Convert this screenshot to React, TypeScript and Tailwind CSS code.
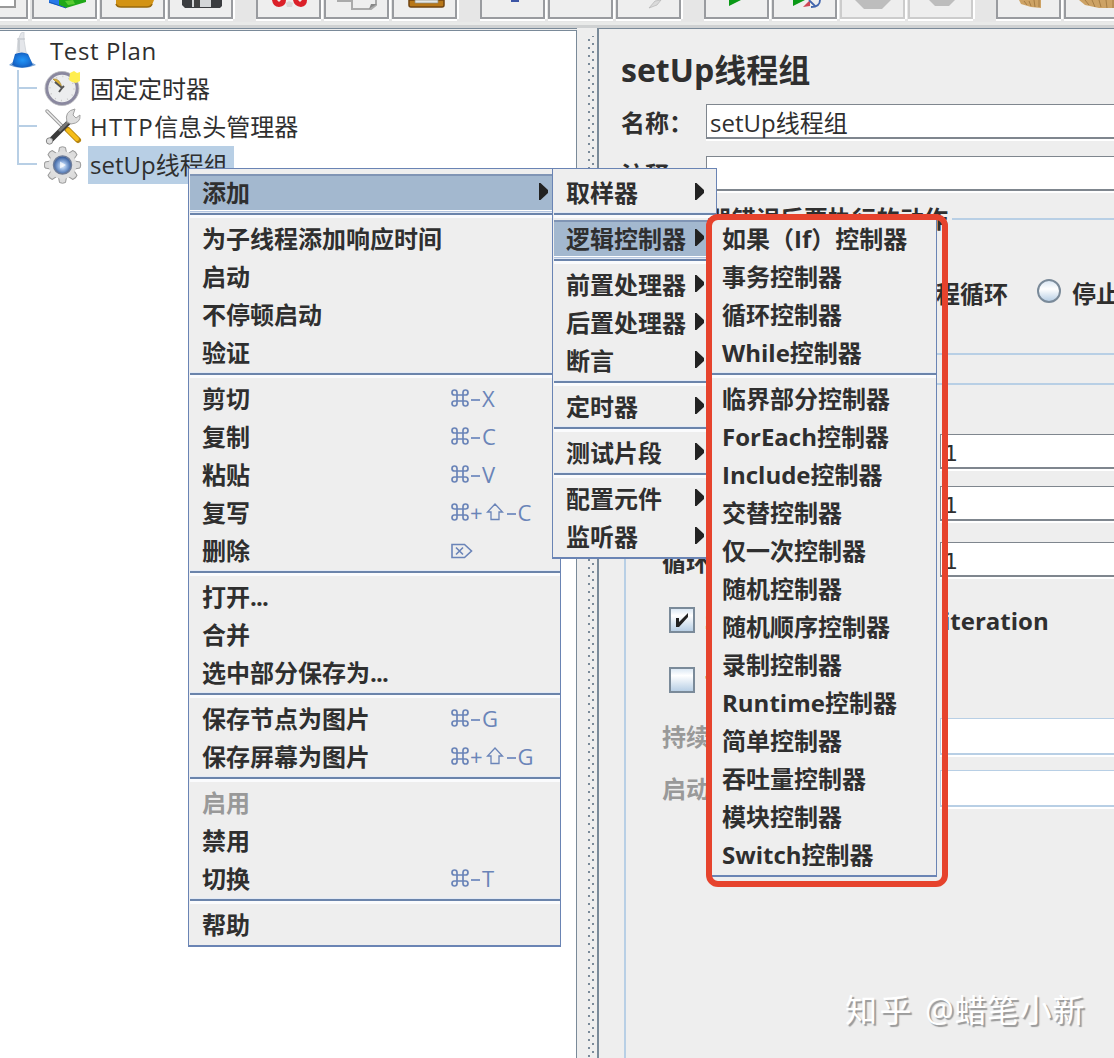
import type { ReactNode } from "react";

type Item = {
  label: string;
  keys?: string;
  arrow?: boolean;
  active?: boolean;
  disabled?: boolean;
};

const contextMenu: Item[][] = [
  [{ label: "添加", arrow: true, active: true }],
  [{ label: "为子线程添加响应时间" }, { label: "启动" }, { label: "不停顿启动" }, { label: "验证" }],
  [
    { label: "剪切", keys: "⌘–X" },
    { label: "复制", keys: "⌘–C" },
    { label: "粘贴", keys: "⌘–V" },
    { label: "复写", keys: "⌘+⇧–C" },
    { label: "删除", keys: "⌦" },
  ],
  [{ label: "打开..." }, { label: "合并" }, { label: "选中部分保存为..." }],
  [
    { label: "保存节点为图片", keys: "⌘–G" },
    { label: "保存屏幕为图片", keys: "⌘+⇧–G" },
  ],
  [{ label: "启用", disabled: true }, { label: "禁用" }, { label: "切换", keys: "⌘–T" }],
  [{ label: "帮助" }],
];

const addMenu: Item[][] = [
  [{ label: "取样器", arrow: true }],
  [{ label: "逻辑控制器", arrow: true, active: true }],
  [
    { label: "前置处理器", arrow: true },
    { label: "后置处理器", arrow: true },
    { label: "断言", arrow: true },
  ],
  [{ label: "定时器", arrow: true }],
  [{ label: "测试片段", arrow: true }],
  [
    { label: "配置元件", arrow: true },
    { label: "监听器", arrow: true },
  ],
];

const controllerMenu: Item[][] = [
  [{ label: "如果（If）控制器" }, { label: "事务控制器" }, { label: "循环控制器" }, { label: "While控制器" }],
  [
    "临界部分控制器",
    "ForEach控制器",
    "Include控制器",
    "交替控制器",
    "仅一次控制器",
    "随机控制器",
    "随机顺序控制器",
    "录制控制器",
    "Runtime控制器",
    "简单控制器",
    "吞吐量控制器",
    "模块控制器",
    "Switch控制器",
  ].map((label) => ({ label })),
];

function Shortcut({ keys }: { keys: string }) {
  return (
    <span className="-mt-0.5 flex w-[110px] items-center font-['Open_Sans'] text-[22px] font-normal text-[#6a84b8]">
      {[...keys].map((k, i) => {
        if (k === "⌘")
          return (
            <svg key={i} width="20" height="18" viewBox="0 0 20 18" fill="none" stroke="currentColor" strokeWidth="1.7">
              <path d="M7 6H13V12H7ZM7 6H4.4A2.5 2.5 0 1 1 7 3.5ZM13 6V3.5A2.5 2.5 0 1 1 15.6 6ZM13 12H15.6A2.5 2.5 0 1 1 13 14.5ZM7 12V14.5A2.5 2.5 0 1 1 4.4 12Z" />
            </svg>
          );
        if (k === "⇧")
          return (
            <svg key={i} className="mr-[2px] ml-[3px]" width="18" height="18" viewBox="0 0 18 18" fill="none" stroke="currentColor" strokeWidth="1.3">
              <path d="M9 1L16.5 9H13V16.500H5V9H1.500Z" />
            </svg>
          );
        if (k === "⌦")
          return (
            <svg key={i} className="mt-0.5" width="24" height="18" viewBox="0 0 24 18" fill="none" stroke="currentColor" strokeWidth="1.6">
              <path d="M2 2.500H14.500L21.500 9L14.500 15.500H2ZM6 5.500L13 12.500M13 5.500L6 12.500" />
            </svg>
          );
        if (k === "–") return <span key={i} className="mt-[3px] mr-0.5 ml-px h-[2px] w-[9px] bg-[#7f96c4]" />;
        return (
          <span key={i} className="leading-6">
            {k}
          </span>
        );
      })}
    </span>
  );
}

function MenuRow({ item, arrowPad }: { item: Item; arrowPad: string }) {
  const [name, dots] = item.label.endsWith("...") ? [item.label.slice(0, -3), "..."] : [item.label, ""];
  return (
    <div className="flex h-[38px] flex-col">
      <div
        className={`flex h-[36px] items-center border-t-2 pl-3 ${
          item.active ? "border-[#8095b5] bg-[#a3b8cf]" : "border-transparent"
        } ${item.disabled ? "text-[#999]" : "text-[#2f2f2f]"}`}
      >
        <span className="flex-1 whitespace-nowrap">
          {name}
          {dots && <span className="tracking-[-0.8px]">{dots}</span>}
        </span>
        {item.keys && <Shortcut keys={item.keys} />}
        {item.arrow && (
          <svg className={`-mt-1 ${arrowPad}`} width="9" height="17" viewBox="0 0 9 17" fill="#222">
            <path d="M0 0H1.500L9 7V10L1.500 17H0Z" />
          </svg>
        )}
      </div>
      {item.active && <div className="h-0.5 border-b border-[#b5c6e0] bg-white" />}
    </div>
  );
}

function Menu({ groups, place, arrowPad = "" }: { groups: Item[][]; place: string; arrowPad?: string }) {
  return (
    <div className={`absolute flex flex-col border border-b-2 border-[#6a84b4] bg-[#eee] pb-px pl-px text-2xl font-bold ${place}`}>
      {groups.map((g, i) => (
        <div key={i} className="flex flex-col">
          {i > 0 && (
            <div className="flex h-2 flex-col">
              <div className="h-px bg-[#e3eaf5]" />
              <div className="h-0.5 bg-[#6b84ab]" />
              <div className="h-[3px] bg-[#fafbfd]" />
            </div>
          )}
          {g.map((it) => (
            <MenuRow key={it.label} item={it} arrowPad={arrowPad} />
          ))}
        </div>
      ))}
    </div>
  );
}

function ToolButton({ children, disabled, className = "" }: { children?: ReactNode; disabled?: boolean; className?: string }) {
  return (
    <div
      className={`mr-[3px] flex h-[19px] w-[65px] shrink-0 justify-center border-x-2 border-b-2 bg-[#eee] shadow-[0_2px_0_#fff,2px_0_0_#fff] ${
        disabled ? "border-[#ccc]" : "border-[#999b9f]"
      } ${className}`}
    >
      <svg width="56" height="14" viewBox="0 0 56 14">
        {children}
      </svg>
    </div>
  );
}

function Toolbar() {
  return (
    <div className="flex h-7 shrink-0 flex-col bg-[#dedede]">
      <div className="flex h-[22px] overflow-hidden bg-[#e6e6e6]">
        <div className="mr-1 h-[19px] w-[28px] shrink-0 border-r-2 border-b-2 border-[#999b9f] bg-[#eee] shadow-[0_2px_0_#fff,2px_0_0_#fff]">
          <div className="h-2 w-4 border-r-2 border-b-2 border-[#999] bg-white" />
        </div>
        <ToolButton>
          <path d="M12 0H30V8L12 3Z" fill="#2878e8" />
          <path d="M22 0H49V2L29 8L22 5Z" fill="#20a818" />
          <path d="M28 1L36 0L38 4L31 5Z" fill="#58cc30" />
          <path d="M12 2L29 8" stroke="#1758b8" />
        </ToolButton>
        <ToolButton>
          <path d="M11 0H49L47 5Q46 7 42 7H16Q12 7 11 4Z" fill="#d39314" />
          <path d="M11 4Q12 7 16 7H42Q46 7 47 4" stroke="#98690d" strokeWidth="1.500" fill="none" />
        </ToolButton>
        <ToolButton>
          <path d="M9 0H49V6L47 8H12L9 5Z" fill="#3b3d40" />
          <path d="M19 0H38V7H19Z" fill="#d4d6d8" />
          <path d="M21 0H27V7H21Z" fill="#444" />
        </ToolButton>
        <ToolButton className="ml-5">
          <path d="M11 0Q12 7 18 7Q25 6 25 0ZM32 0Q33 6 40 7Q46 6 46 0Z" fill="#db2028" />
          <path d="M16 0L18 2L20 0ZM37 0L39 2L41 0Z" fill="#eee" />
          <path d="M25 3L28 1L32 3L31 7H26Z" fill="#d8d8d8" />
        </ToolButton>
        <ToolButton>
          <path d="M9 0V1H23V-2H47V5L42 9H23V0" fill="#eee" stroke="#aaa" strokeWidth="2" />
          <path d="M40 9L42 4H48Z" fill="#888" />
        </ToolButton>
        <ToolButton>
          <path d="M12 0H47V5Q47 7 45 7H14Q12 7 12 5Z" fill="#b87718" stroke="#704410" strokeWidth="1.500" />
          <path d="M18 0H41V3H18Z" fill="#e5e8e8" stroke="#8a8a80" strokeWidth=".7" />
        </ToolButton>
        <ToolButton className="ml-5">
          <rect x="26" y="0" width="8" height="2" fill="#3c55a5" />
        </ToolButton>
        <ToolButton />
        <ToolButton>
          <path d="M28 8L34 1L40 0L36 5Z" fill="#dadada" stroke="#b5b5b5" strokeWidth=".7" />
        </ToolButton>
        <ToolButton className="ml-5">
          <path d="M20 0H32L20 6Z" fill="#0a9916" />
        </ToolButton>
        <ToolButton>
          <path d="M16 0H28L16 6Z" fill="#0a9916" />
          <path d="M26 7L33 0V6Z" fill="#cf4655" />
          <path d="M34 7Q43 7 43 0M32 0L38 6" stroke="#4265ad" strokeWidth="1.800" fill="none" />
        </ToolButton>
        <ToolButton disabled>
          <path d="M10 0H46L37 9H19Z" fill="#bdbdbd" />
        </ToolButton>
        <ToolButton disabled>
          <path d="M16 0H42L36 6H22Z" fill="#bdbdbd" />
        </ToolButton>
        <ToolButton className="ml-5">
          <path d="M18 0H40V8L30 7L20 4Z" fill="#cda264" />
          <path d="M23 1L26 5M28 1L30 6M33 0L34 7M38 0V7" stroke="#a67d44" />
        </ToolButton>
        <ToolButton>
          <path d="M10 0H56V8H30L16 5Z" fill="#cda264" />
          <path d="M16 0L20 5M23 0L26 7M30 0L32 7M37 0L38 8M44 0V8M50 0V8" stroke="#a67d44" />
        </ToolButton>
      </div>
      <div className="h-[3px] bg-[#e9eae9]" />
      <div className="h-[3px] bg-[#cfd1d2]" />
    </div>
  );
}

function Flask() {
  return (
    <svg className="-ml-0.5" width="30" height="38" viewBox="0 0 30 38">
      <defs>
        <radialGradient id="liquid">
          <stop offset="0" stopColor="#2196f8" />
          <stop offset=".6" stopColor="#1a78dc" />
          <stop offset="1" stopColor="#1560c0" />
        </radialGradient>
      </defs>
      <path d="M2 33L6 30H24L29 33Q22 36 15 36Q8 36 2 33Z" fill="#6e9fd6" />
      <path d="M14 1L17 0V8L19 20L26 33H5L10 20L11 8Z" fill="#e4e6ea" stroke="#cdd1d6" strokeWidth=".8" />
      <path d="M8 22Q15 19 21 22L26 33Q15 38 5 33Z" fill="url(#liquid)" />
      <path d="M10 7H18M12 8V20" stroke="#b9bec4" strokeWidth="1.200" />
    </svg>
  );
}

function Clock() {
  return (
    <svg width="40" height="38" viewBox="0 0 40 38">
      <circle cx="18" cy="18.500" r="15.300" fill="#ecedee" stroke="#8a889f" strokeWidth="3.200" />
      <circle cx="18" cy="18.500" r="17" fill="none" stroke="#b9b9bd" strokeWidth=".8" />
      <circle cx="18" cy="18.500" r="12" fill="none" stroke="#c8c8c8" strokeDasharray="1 5.283" strokeWidth="1.500" />
      <path d="M9 9Q16 8 18 18Z" fill="#dcb030" stroke="#a88836" strokeWidth=".7" />
      <path d="M11 12L18 18L20 16M18 18L15 22" stroke="#555" strokeWidth="2" fill="none" />
      <path d="M30 1L33 3L36 2V11L32 13L28 12L25 10L26 3Z" fill="#ffee50" />
    </svg>
  );
}

function Tools() {
  return (
    <svg width="40" height="38" viewBox="0 0 40 38">
      <path d="M3 3L21 21" stroke="#9b9b9b" strokeWidth="3.500" strokeLinecap="round" />
      <path d="M3 3L21 21" stroke="#eee" strokeWidth="1.500" strokeLinecap="round" />
      <path d="M24 22L34 32" stroke="#b58410" strokeWidth="6" strokeLinecap="round" />
      <path d="M24 22L33 31" stroke="#f6bd18" strokeWidth="4" strokeLinecap="round" />
      <path d="M6 33L25 14" stroke="#3a3a3a" strokeWidth="5" strokeLinecap="round" />
      <path d="M15 23L26 12" stroke="#777" strokeWidth="3" />
      <circle cx="5.500" cy="33" r="3.200" fill="#ddd" stroke="#888" />
      <path d="M23 14Q20 3 31 1L29 7L32 10L36 7Q37 15 27 16Z" fill="#dedede" stroke="#a2a2a2" />
    </svg>
  );
}

const teeth = [0, 45, 90, 135, 180, 225, 270, 315];

function Gear() {
  return (
    <svg width="40" height="38" viewBox="0 0 40 38">
      <defs>
        <radialGradient id="hub" cx=".5" cy=".55">
          <stop offset="0" stopColor="#e8f1fc" />
          <stop offset=".4" stopColor="#9bbae5" />
          <stop offset="1" stopColor="#355d9e" />
        </radialGradient>
      </defs>
      {teeth.map((a) => (
        <path key={a} d="M14.500 7L15.500 1.500Q18.500 0 21.500 1.500L22.500 7Z" fill="#dcdcdc" stroke="#999" transform={`rotate(${a} 18.500 19)`} />
      ))}
      <circle cx="18.500" cy="19" r="13.800" fill="#dfdfdf" />
      <circle cx="18.500" cy="19" r="9" fill="url(#hub)" stroke="#6e7d9a" strokeWidth="1.500" />
      <path d="M16 15.500L22 19L16 22.500Z" fill="#fff" opacity=".7" />
    </svg>
  );
}

function TreeRow({ icon, label, selected, last }: { icon: ReactNode; label: ReactNode; selected?: boolean; last?: boolean }) {
  return (
    <div className="flex h-[38px] items-center pl-[17px]">
      <div className={`flex h-[38px] w-5 flex-col ${last ? "" : "border-l-2 border-[#b8cfe5]"}`}>
        <div className={`h-[19px] border-b-2 border-[#b8cfe5] ${last ? "border-l-2" : ""}`} />
      </div>
      <div className="ml-[7px] w-10">{icon}</div>
      <div className={`ml-1 flex h-[38px] items-center pr-1.5 pl-0.5 ${selected ? "bg-[#b8cfe5]" : ""}`}>{label}</div>
    </div>
  );
}

function Field({ value = "", muted, className = "" }: { value?: string; muted?: boolean; className?: string }) {
  return (
    <div
      className={`flex h-[35px] shrink-0 items-center border-t border-b-2 border-l bg-white pt-[3px] pl-[3px] text-2xl font-normal shadow-[0_2px_0_#fff] ${
        muted ? "border-[#b8cfe5]" : "border-[#7f868e]"
      } ${className}`}
    >
      {value}
    </div>
  );
}

function Check({ on }: { on?: boolean }) {
  return (
    <div className="flex size-[26px] shrink-0 items-center justify-center border-2 border-[#7a8a99] bg-linear-to-b from-[#dce8f4] via-white via-30% to-[#b8cfe5]">
      {on && (
        <svg width="16" height="16" viewBox="0 0 16 16" fill="#222">
          <path d="M2 6H5V10L14 1V5L5 15H2Z" />
        </svg>
      )}
    </div>
  );
}

function Editor() {
  return (
    <div className="flex min-w-0 flex-1 flex-col overflow-hidden border-t border-l-2 border-[#7a8a99] bg-[#eee] font-bold">
      <h1 className="mt-[17px] ml-[22px] h-12 text-[32px] leading-[48px] whitespace-nowrap">setUp线程组</h1>
      <div className="mt-[10px] ml-[22px] flex h-[35px] items-center text-2xl">
        <div className="w-[85px] shrink-0 pt-0.5">名称：</div>
        <Field value="setUp线程组" className="flex-1" />
      </div>
      <div className="mt-[17px] ml-[22px] flex h-[35px] items-center text-2xl">
        <div className="w-[85px] shrink-0 pt-0.5">注释：</div>
        <Field className="flex-1" />
      </div>

      <section className="relative mt-[27px] ml-[25px] flex h-[137px] shrink-0 items-center border-y-2 border-l-2 border-[#b8cfe5] text-2xl">
        <div className="absolute -top-[17px] left-[6px] bg-[#eee] px-1 whitespace-nowrap">在取样器错误后要执行的动作</div>
        <div className="ml-[190px] flex shrink-0 items-center pt-3.5 whitespace-nowrap">
          <span>启动下一进程循环</span>
          <span className="mt-[-5px] mr-[11px] ml-[29px] size-6 shrink-0 rounded-full border-2 border-[#7a8a99] bg-linear-to-b from-[#dce8f4] via-white via-40% to-[#b8cfe5]" />
          <span>停止</span>
        </div>
      </section>

      <section className="mt-7 -mb-1 ml-[25px] flex flex-1 flex-col border-t-2 border-l-2 border-[#b8cfe5] pl-9 text-2xl">
        {["线程数:", "Ramp-Up时间(秒):", "循环次数"].map((label, i) => (
          <div key={label} className={`flex h-[35px] items-center ${["mt-[49px]", "mt-[17px]", "mt-[21px]"][i]}`}>
            <div className="w-[278px] shrink-0 pt-1">{label}</div>
            <Field value="1" className="flex-1 pt-[5px]! font-['DejaVu_Sans'] text-[22px]!" />
          </div>
        ))}
        <div className="mt-[30px] ml-[7px] flex h-[26px] items-center whitespace-nowrap">
          <Check on />
          <span className="w-[249px] pl-2.5 pt-px">Same user on each</span>
          <span className="-ml-px pt-px">iteration</span>
        </div>
        <div className="mt-[34px] ml-[7px] flex h-[26px] items-center">
          <Check />
          <span className="ml-2.5">调度器</span>
        </div>
        <div className="mt-[25px] flex h-[37px] items-center text-[#999]">
          <div className="w-[278px] shrink-0">持续时间(秒)</div>
          <Field muted className="h-[37px]! flex-1" />
        </div>
        <div className="mt-[15px] flex h-[37px] items-center text-[#999]">
          <div className="w-[278px] shrink-0">启动延迟(秒)</div>
          <Field muted className="h-[37px]! flex-1" />
        </div>
      </section>
    </div>
  );
}

export default function App() {
  return (
    <div className="relative flex h-[1058px] w-[1114px] flex-col overflow-hidden bg-[#eee] font-['Open_Sans','Noto_Sans_CJK_SC',sans-serif] text-[#2f2f2f]">
      <Toolbar />
      <div className="flex min-h-0 flex-1">
        <div className="flex w-[577px] shrink-0 flex-col border-t border-[#7a8a99] pt-px">
          <div className="flex-1 border-t border-r border-[#7a8a99] bg-white pt-px text-2xl">
            <div className="flex h-[38px] items-center pl-[9px]">
              <Flask />
              <span className="ml-[13px] tracking-[0.6px]">Test Plan</span>
            </div>
            <TreeRow icon={<Clock />} label="固定定时器" />
            <TreeRow
              icon={<Tools />}
              label={
                <>
                  <span className="tracking-[1.4px]">HTTP</span>信息头管理器
                </>
              }
            />
            <TreeRow icon={<Gear />} label="setUp线程组" selected last />
          </div>
        </div>
        <div className="flex w-5 shrink-0 justify-end pt-2 pr-0.5">
          <div className="w-2 bg-[radial-gradient(circle,#7a8a99_1px,transparent_1.3px),radial-gradient(circle,#7a8a99_1px,transparent_1.3px)] bg-[length:8px_8px] bg-[position:-2px_0,2px_4px]" />
        </div>
        <Editor />
      </div>

      <Menu groups={contextMenu} place="left-[188px] top-[168px] w-[373px] pt-[5px]" arrowPad="mr-[12px]" />
      <Menu groups={addMenu} place="left-[552px] top-[168px] w-[165px] pt-[5px]" arrowPad="mr-[12px]" />
      <Menu groups={controllerMenu} place="left-[708px] top-[218px] w-[229px] pt-px" />
      <div className="absolute top-[214px] left-[706px] h-[673px] w-[242px] rounded-xl border-[6px] border-[#e6432d]" />

      <div className="absolute top-[986px] left-[845px] flex h-12 items-center text-[32px] whitespace-nowrap text-white [text-shadow:2px_2px_1px_#999]">
        <span className="tracking-[2.5px]">知乎</span>
        <span className="ml-[11px] tracking-[0.7px]">@蜡笔小新</span>
      </div>
    </div>
  );
}
